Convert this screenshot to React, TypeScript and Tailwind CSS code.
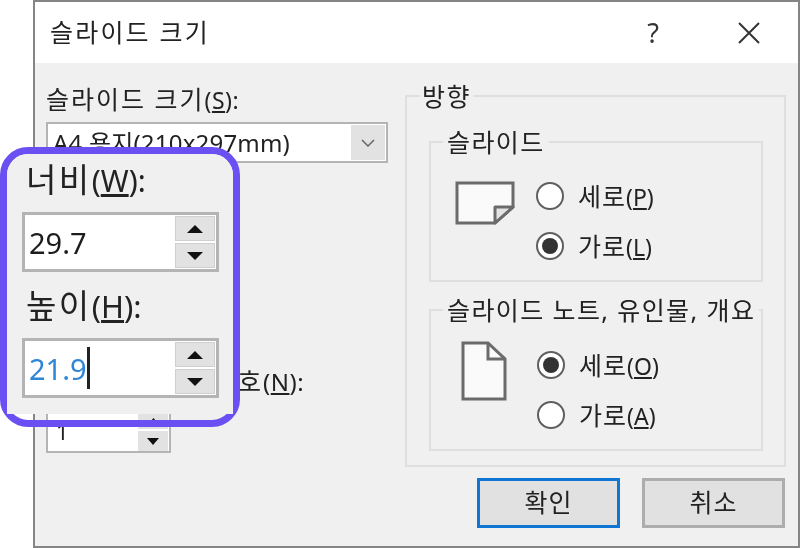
const font = { fontFamily: '"Noto Sans", "Noto Sans CJK KR", sans-serif' };

function Arrow({ down = false, w = 16, h = 8 }: { down?: boolean; w?: number; h?: number }) {
  return (
    <svg width={w} height={h} viewBox="0 0 16 8" preserveAspectRatio="none">
      <path d={down ? "M0 0H16L8 8Z" : "M0 8H16L8 0Z"} fill="#111" />
    </svg>
  );
}

function Radio({ checked, label, hot }: { checked?: boolean; label: string; hot: string }) {
  return (
    <div className="flex items-center gap-[14px] h-[50px]">
      <span className="flex items-center justify-center w-[28px] h-[28px] rounded-full border-2 border-[#5f5f5f] bg-white">
        {checked && <span className="w-[16px] h-[16px] rounded-full bg-[#333333]" />}
      </span>
      <span className="text-[25px] leading-none text-[#222] tracking-[1px]">
        {label}
        <span className="text-[23px] tracking-[0px]">
          (<span className="underline underline-offset-2">{hot}</span>)
        </span>
      </span>
    </div>
  );
}

function Spin({ value, active }: { value: string; active?: boolean }) {
  return (
    <div className="flex items-center w-[197px] h-[60px] border-[3px] border-[#b4b4b4] bg-white pl-[4px] pr-[1px]">
      <div className="flex-1 flex items-center h-full">
        <span className={`text-[29px] leading-none ${active ? "text-[#2f86d6]" : "text-[#1c1c1c]"}`}>{value}</span>
        {active && <span className="w-[3px] h-[42px] bg-[#222]" />}
      </div>
      <div className="flex flex-col gap-[2px] w-[40px]">
        <div className="h-[25px] flex items-center justify-center bg-[#e2e2e2] border border-[#cfcfcf]"><Arrow /></div>
        <div className="h-[25px] flex items-center justify-center bg-[#e2e2e2] border border-[#cfcfcf]"><Arrow down /></div>
      </div>
    </div>
  );
}

export default function App() {
  return (
    <div className="relative w-[800px] h-[548px] bg-white overflow-hidden blur-[0.4px]" style={font}>
      <div className="ml-[33px] w-[767px] h-[548px] border-2 border-[#858585] flex flex-col bg-[#f0f0f0] text-[#222]">
        <div className="h-[61px] bg-white flex items-center pl-[15px] shrink-0">
          <span className="text-[25px] tracking-[2.2px] leading-none flex-1">슬라이드 크기</span>
          <span className="text-[27px] leading-none text-[#333] mr-[79px]">?</span>
          <svg width="22" height="22" viewBox="0 0 22 22" className="mr-[38px]">
            <path d="M1 1L21 21M21 1L1 21" stroke="#333" strokeWidth="2" fill="none" />
          </svg>
        </div>
        <div className="flex-1 flex pl-[11px] pr-[12px] pt-[20px]">
          <div className="w-[342px] shrink-0">
            <div className="text-[25px] leading-[32px] h-[39px] tracking-[2px]">
              슬라이드 크기<span className="text-[23px] tracking-[0.5px]">(<span className="underline underline-offset-2">S</span>):</span>
            </div>
            <div className="h-[41px] flex items-center border-[2px] border-[#b4b4b4] bg-white pl-[5px] pr-[1px]">
              <span className="flex-1 text-[24px] leading-none tracking-[0.2px]">A4 용지(210x297mm)</span>
              <span className="w-[34px] h-[35px] bg-[#e2e2e2] flex items-center justify-center">
                <svg width="14" height="8" viewBox="0 0 14 8"><path d="M1 1L7 7L13 1" stroke="#666" strokeWidth="1.5" fill="none" /></svg>
              </span>
            </div>
            <div className="mt-[199px] h-[38px] text-[25px] leading-[38px] tracking-[2px] whitespace-nowrap">
              슬라이드 시작 번호<span className="text-[24px] tracking-[0.5px]">(<span className="underline underline-offset-2">N</span>):</span>
            </div>
            <div className="mt-[6px] w-[125px] h-[47px] flex items-end border-2 border-[#b4b4b4] bg-white pl-[8px]">
              <span className="flex-1 text-[22px] leading-none pb-[9px]">1</span>
              <div className="flex flex-col w-[30px] gap-[2px] mr-[1px] mb-[0px]">
                <div className="h-[20px] flex justify-center pt-[9px] bg-[#e2e2e2]"><Arrow w={11} h={7} /></div>
                <div className="h-[20px] flex items-center justify-center bg-[#e2e2e2]"><Arrow down w={12} h={7} /></div>
              </div>
            </div>
          </div>
          <div className="ml-[17px] flex-1 flex flex-col">
            <fieldset className="w-[381px] h-[387px] -mt-[3px] border-2 border-[#dfdfdf] pl-[22px] pr-[21px]">
              <legend className="-ml-[9px] px-[2px] text-[25px] leading-[32px] tracking-[1.4px]">방향</legend>
              <fieldset className="h-[156px] mt-[14px] border-2 border-[#dfdfdf] pl-[24px]">
                <legend className="-ml-[12px] px-[4px] text-[25px] leading-[32px] tracking-[1.4px]">슬라이드</legend>
                <div className="flex items-start mt-[13px]">
                  <svg width="60" height="44" viewBox="0 0 60 44" className="mt-[10px] mr-[21px] shrink-0">
                    <path d="M2 2H58V26L40 42H2Z" fill="#fafafa" stroke="#6b6b6b" strokeWidth="3" />
                    <path d="M58 26H40V42Z" fill="#e4e4e4" stroke="#6b6b6b" strokeWidth="3" strokeLinejoin="round" />
                  </svg>
                  <div className="flex flex-col">
                    <Radio label="세로" hot="P" />
                    <Radio checked label="가로" hot="L" />
                  </div>
                </div>
              </fieldset>
              <fieldset className="h-[157px] mt-[12px] border-2 border-[#dfdfdf] pl-[30px]">
                <legend className="-ml-[18px] px-[4px] text-[25px] leading-[32px] tracking-[1.4px] whitespace-nowrap">슬라이드 노트, 유인물, 개요</legend>
                <div className="flex items-start mt-[14px]">
                  <svg width="46" height="60" viewBox="0 0 46 60" className="mt-[1px] mr-[30px] shrink-0">
                    <path d="M2 2H27L44 18V58H2Z" fill="#fafafa" stroke="#6b6b6b" strokeWidth="3" />
                    <path d="M27 2V18H44" fill="none" stroke="#6b6b6b" strokeWidth="3" />
                  </svg>
                  <div className="flex flex-col">
                    <Radio checked label="세로" hot="O" />
                    <Radio label="가로" hot="A" />
                  </div>
                </div>
              </fieldset>
            </fieldset>
            <div className="flex gap-[22px] ml-[72px] mt-[11px]">
              <button className="w-[143px] h-[50px] bg-[#e1e1e1] border-[3px] border-[#0f77d3] text-[25px] tracking-[1px]">확인</button>
              <button className="w-[143px] h-[50px] bg-[#e1e1e1] border-[3px] border-[#adadad] text-[25px] tracking-[1px]">취소</button>
            </div>
          </div>
        </div>
      </div>

      <div className="absolute left-0 top-[147px] w-[240px] h-[280px] border-[7px] border-[#6a4ff2] rounded-[28px] text-[#222]">
        <div className="h-[260px] bg-[#f0f0f0] rounded-t-[21px] pl-[15px] pt-[2px]">
          <div className="h-[56px] pl-[4px] text-[33px] leading-[48px] tracking-[2.5px]">
            너비<span className="text-[30px] tracking-[0px]">(<span className="underline underline-offset-2">W</span>):</span>
          </div>
          <Spin value="29.7" />
          <div className="mt-[5px] h-[61px] pl-[4px] text-[33px] leading-[58px] tracking-[2.5px]">
            높이<span className="text-[31px] tracking-[0px]">(<span className="underline underline-offset-2">H</span>):</span>
          </div>
          <Spin value="21.9" active />
        </div>
      </div>
    </div>
  );
}
